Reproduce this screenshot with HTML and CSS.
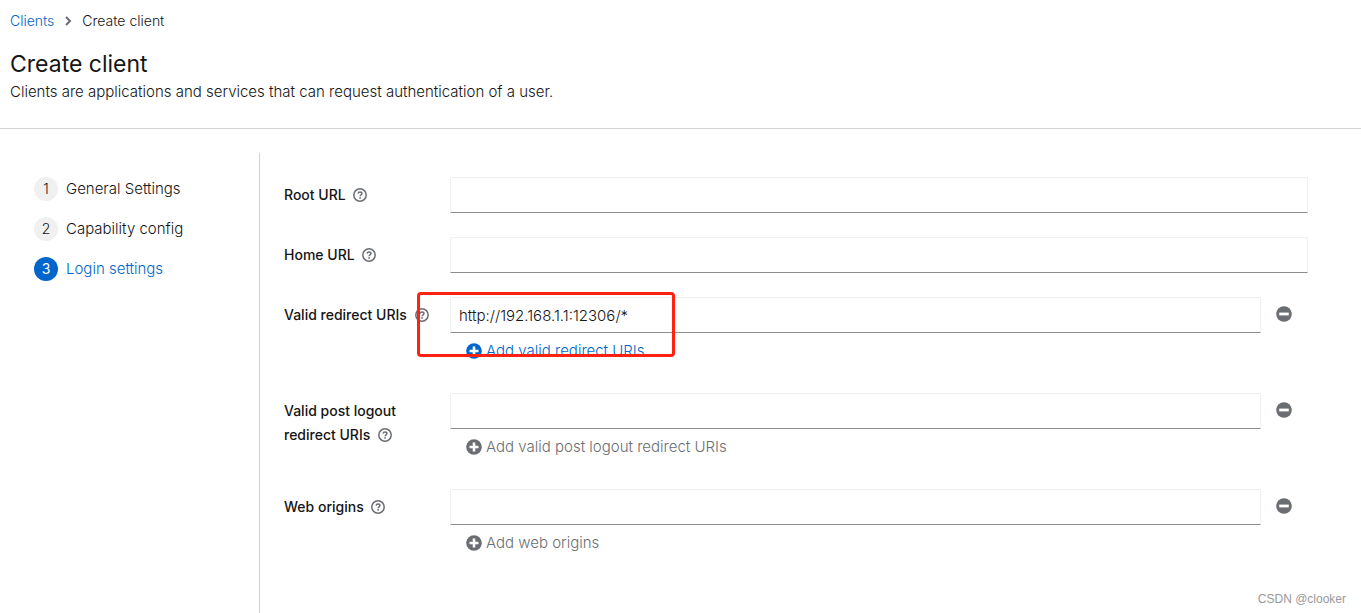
FILE: index.html
```html
<!DOCTYPE html>
<html lang="en">
<head>
<meta charset="utf-8">
<title>Create client</title>
<link rel="stylesheet" href="styles.css">
</head>
<body>
<svg class="sprite" aria-hidden="true">
  <symbol id="help" viewBox="0 0 14 14"><circle cx="7" cy="7" r="6.2" fill="none" stroke="currentColor" stroke-width="1.5"/><path d="M5 5.6C5.2 4.5 6 4 7 4c1.200 0 2 .6 2 1.600C9 6.900 7.100 6.800 7.100 8.200" fill="none" stroke="currentColor" stroke-width="1.400"/><circle cx="7.100" cy="9.900" r=".9" fill="currentColor"/></symbol>
  <symbol id="plus" viewBox="0 0 16 16"><circle cx="8" cy="8" r="7.800" fill="currentColor"/><path d="M8 3.500v9M3.500 8h9" stroke="#fff" stroke-width="2.600"/></symbol>
  <symbol id="minus" viewBox="0 0 16 16"><circle cx="8" cy="8" r="7.800" fill="currentColor"/><path d="M3.200 8h9.600" stroke="#fff" stroke-width="2.800"/></symbol>
</svg>
<header class="page-header">
  <nav class="breadcrumb" aria-label="Breadcrumb">
    <a href="#">Clients</a>
    <svg class="chevron" viewBox="0 0 8 10"><path d="M2 1l4 4-4 4" fill="none" stroke="currentColor" stroke-width="2"/></svg>
    <span>Create client</span>
  </nav>
  <h1 class="title">Create client</h1>
  <p class="subtitle">Clients are applications and services that can request authentication of a user.</p>
</header>
<div class="wizard">
  <nav class="steps" aria-label="Steps">
    <button type="button" class="step"><span class="number">1</span>General Settings</button>
    <button type="button" class="step"><span class="number">2</span>Capability config</button>
    <button type="button" class="step current" aria-current="step"><span class="number">3</span>Login settings</button>
  </nav>
  <main class="main">
    <form class="form">
      <div class="row">
        <div class="label"><label for="root">Root URL</label> <button type="button" class="help" aria-label="Help for Root URL"><svg><use href="#help"/></svg></button></div>
        <div class="field"><input class="input" id="root" type="text"></div>
      </div>
      <div class="row">
        <div class="label"><label for="home">Home URL</label> <button type="button" class="help" aria-label="Help for Home URL"><svg><use href="#help"/></svg></button></div>
        <div class="field"><input class="input" id="home" type="text"></div>
      </div>
      <div class="row">
        <div class="label"><label for="redirect">Valid redirect URIs</label> <button type="button" class="help" aria-label="Help for Valid redirect URIs"><svg><use href="#help"/></svg></button></div>
        <div class="field">
          <div class="entry"><input class="input" id="redirect" type="text" value="http://192.168.1.1:12306/*"><button type="button" class="remove" aria-label="Remove"><svg><use href="#minus"/></svg></button></div>
          <button type="button" class="add active"><svg><use href="#plus"/></svg>Add valid redirect URIs</button>
          <div class="highlight"></div>
        </div>
      </div>
      <div class="row">
        <div class="label"><label for="logout">Valid post logout redirect URIs</label> <button type="button" class="help" aria-label="Help for Valid post logout redirect URIs"><svg><use href="#help"/></svg></button></div>
        <div class="field">
          <div class="entry"><input class="input" id="logout" type="text"><button type="button" class="remove" aria-label="Remove"><svg><use href="#minus"/></svg></button></div>
          <button type="button" class="add"><svg><use href="#plus"/></svg>Add valid post logout redirect URIs</button>
        </div>
      </div>
      <div class="row">
        <div class="label"><label for="origins">Web origins</label> <button type="button" class="help" aria-label="Help for Web origins"><svg><use href="#help"/></svg></button></div>
        <div class="field">
          <div class="entry"><input class="input" id="origins" type="text"><button type="button" class="remove" aria-label="Remove"><svg><use href="#minus"/></svg></button></div>
          <button type="button" class="add"><svg><use href="#plus"/></svg>Add web origins</button>
        </div>
      </div>
    </form>
  </main>
</div>
<footer class="credit">CSDN @clooker</footer>
</body>
</html>
```
FILE: styles.css
```css
* { box-sizing: border-box; }
body {
  margin: 0;
  min-height: 100vh;
  display: flex;
  flex-direction: column;
  background: #fff;
  color: #151515;
  font: 300 15px/24px Inter, "Open Sans", sans-serif;
}
button {
  padding: 0;
  border: 0;
  background: none;
  color: inherit;
  font: inherit;
  text-align: left;
  cursor: pointer;
}
svg { display: block; }
.sprite { position: absolute; width: 0; height: 0; }
.page-header {
  padding: 10px 10px 24px;
  border-bottom: 1px solid #d2d2d2;
}
.breadcrumb {
  display: flex;
  align-items: center;
  gap: 10px;
  font-size: 14px;
  line-height: 22px;
}
.breadcrumb a { color: #06c; text-decoration: none; }
.chevron { width: 8px; height: 10px; color: #6a6e73; }
.title {
  margin: 17px 0 0;
  font-size: 23px;
  font-weight: 400;
  line-height: 31px;
}
.subtitle { margin: 0; }
.wizard { flex: 1; display: flex; padding-top: 24px; }
.steps {
  width: 260px;
  flex: none;
  display: flex;
  flex-direction: column;
  align-items: flex-start;
  gap: 16px;
  padding: 24px 34px;
  border-right: 1px solid #d2d2d2;
}
.step { display: flex; align-items: center; gap: 8px; white-space: nowrap; }
.number {
  width: 24px;
  height: 24px;
  border-radius: 50%;
  background: #f0f0f0;
  font-size: 14px;
  text-align: center;
}
.current { color: #06c; }
.current .number { background: #06c; color: #fff; font-weight: 400; }
.main { flex: 1; min-width: 0; padding: 24px 53px 24px 24px; }
.form { display: flex; flex-direction: column; gap: 24px; }
.row {
  display: grid;
  grid-template-columns: 150px minmax(0, 1fr);
  gap: 16px;
}
.label {
  padding-top: 6px;
  font-size: 14px;
  font-weight: 500;
}
.help {
  display: inline-block;
  margin-left: 4px;
  vertical-align: -2px;
  line-height: 0;
  color: #6a6e73;
}
.help svg { width: 14px; height: 14px; }
.field { position: relative; }
.entry { display: flex; }
.input {
  display: block;
  width: 100%;
  min-width: 0;
  height: 36px;
  padding: 0 8px;
  border: 1px solid #f0f0f0;
  border-bottom-color: #8a8d90;
  border-radius: 0;
  background: #fff;
  color: #151515;
  font: inherit;
  outline: 0;
}
.remove { padding: 9px 16px 11px 15px; color: #6a6e73; }
.remove svg, .add svg { width: 16px; height: 16px; }
.add {
  display: flex;
  align-items: center;
  gap: 4px;
  padding: 6px 16px;
  color: #6a6e73;
}
.active { color: #06c; }
.highlight {
  position: absolute;
  top: -5px;
  left: -33px;
  width: 258px;
  height: 65px;
  border: 3px solid #f21;
  border-radius: 4px;
  pointer-events: none;
}
.credit {
  position: absolute;
  right: 15px;
  bottom: 6px;
  color: #999;
  font: 12px/16px "Liberation Sans", Arial, sans-serif;
}
```
